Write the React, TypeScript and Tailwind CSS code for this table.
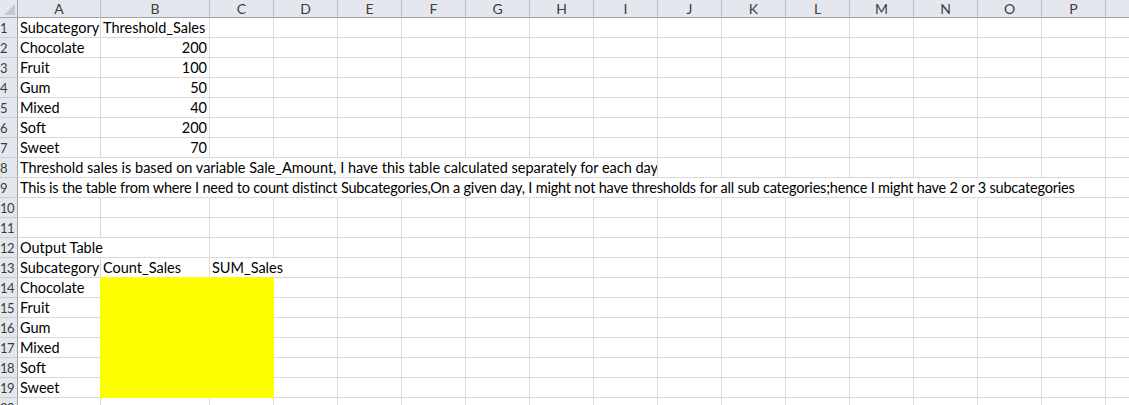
import React from "react";

const ROWHDR = 18;
const COL_WIDTHS = [83, 109, 64, 64, 64, 64, 64, 64, 64, 64, 64, 64, 64, 64, 64, 64, 64];
const LETTERS = ["A", "B", "C", "D", "E", "F", "G", "H", "I", "J", "K", "L", "M", "N", "O", "P", "Q"];

type Cell = { text: string; right?: boolean; tight?: boolean };
type Row = { cells?: Record<number, Cell>; hide?: number[] };

const ROWS: Record<number, Row> = {
  1: { cells: { 0: { text: "Subcategory" }, 1: { text: "Threshold_Sales" } } },
  2: { cells: { 0: { text: "Chocolate" }, 1: { text: "200", right: true } } },
  3: { cells: { 0: { text: "Fruit" }, 1: { text: "100", right: true } } },
  4: { cells: { 0: { text: "Gum" }, 1: { text: "50", right: true } } },
  5: { cells: { 0: { text: "Mixed" }, 1: { text: "40", right: true } } },
  6: { cells: { 0: { text: "Soft" }, 1: { text: "200", right: true } } },
  7: { cells: { 0: { text: "Sweet" }, 1: { text: "70", right: true } } },
  8: {
    cells: {
      0: {
        text: "Threshold sales is based on variable Sale_Amount, I have this table calculated separately for each day",
      },
    },
    hide: [0, 1, 2, 3, 4, 5, 6, 7],
  },
  9: {
    cells: {
      0: {
        text: "This is the table from where I need to count distinct Subcategories,On a given day, I might not have thresholds for all sub categories;hence I might have 2 or 3 subcategories",
        tight: true,
      },
    },
    hide: [0, 1, 2, 3, 4, 5, 6, 7, 8, 9, 10, 11, 12, 13, 14],
  },
  12: { cells: { 0: { text: "Output Table" } }, hide: [0] },
  13: {
    cells: { 0: { text: "Subcategory" }, 1: { text: "Count_Sales" }, 2: { text: "SUM_Sales" } },
    hide: [2],
  },
  14: { cells: { 0: { text: "Chocolate" } } },
  15: { cells: { 0: { text: "Fruit" } } },
  16: { cells: { 0: { text: "Gum" } } },
  17: { cells: { 0: { text: "Mixed" } } },
  18: { cells: { 0: { text: "Soft" } } },
  19: { cells: { 0: { text: "Sweet" } } },
};

const FONT = { fontFamily: "Lato, 'Open Sans', sans-serif" };

function isYellow(r: number, c: number) {
  return r >= 14 && r <= 19 && (c === 1 || c === 2);
}

function DataRow({ n }: { n: number }) {
  const row = ROWS[n] || {};
  const hide = new Set(row.hide || []);
  return (
    <div className="flex h-[20px] shrink-0">
      <div
        className="h-[20px] shrink-0 overflow-hidden whitespace-nowrap border-r border-b border-r-[#9aa3ae] border-b-[#c9ced6] bg-[#e4e8ee] text-[13px] leading-[20px] tracking-[-0.6px] text-[#3c3c3c]"
        style={{ width: ROWHDR }}
      >
        {n}
      </div>
      {COL_WIDTHS.map((w, c) => {
        const cell = row.cells?.[c];
        const yellow = isYellow(n, c);
        const leftOfYellow = n >= 14 && n <= 19 && c === 0;
        const aboveYellow = n === 13 && (c === 1 || c === 2);
        let rightCls = "border-r-[#d9d9d9]";
        if (hide.has(c)) rightCls = "border-r-transparent";
        if (yellow || leftOfYellow) rightCls = "border-r-[#ffff00]";
        const bottomCls = yellow || aboveYellow ? "border-b-[#ffff00]" : "border-b-[#d9d9d9]";
        return (
          <div
            key={c}
            className={`h-[20px] shrink-0 border-r border-b ${rightCls} ${bottomCls} ${
              yellow ? "bg-[#ffff00]" : ""
            } whitespace-nowrap px-[2px] text-[14.5px] leading-[20px] text-black ${
              cell?.right ? "text-right" : "text-left"
            } ${cell?.tight ? "tracking-[-0.19px]" : ""}`}
            style={{ width: w }}
          >
            {cell ? cell.text : ""}
          </div>
        );
      })}
    </div>
  );
}

export default function App() {
  const rows = Array.from({ length: 20 }, (_, i) => i + 1);
  return (
    <div className="h-[405px] w-[1129px] overflow-hidden bg-white" style={FONT}>
      <div className="flex h-[18px] shrink-0">
        <div className="h-[18px] w-[18px] shrink-0 border-r border-b border-r-[#9aa3ae] border-b-[#9aa3ae] bg-[#e4e8ee]">
          <svg width="17" height="17" viewBox="0 0 17 17" className="block">
            <polygon points="15,4 15,15 4,15" fill="#c2c8cf" />
          </svg>
        </div>
        {COL_WIDTHS.map((w, c) => (
          <div
            key={c}
            className="h-[18px] shrink-0 border-r border-b border-r-[#b9c0c9] border-b-[#9aa3ae] bg-[#e4e8ee] text-center text-[14px] leading-[17px] text-[#3c3c3c]"
            style={{ width: w }}
          >
            {LETTERS[c]}
          </div>
        ))}
      </div>
      {rows.map((n) => (
        <DataRow key={n} n={n} />
      ))}
    </div>
  );
}
